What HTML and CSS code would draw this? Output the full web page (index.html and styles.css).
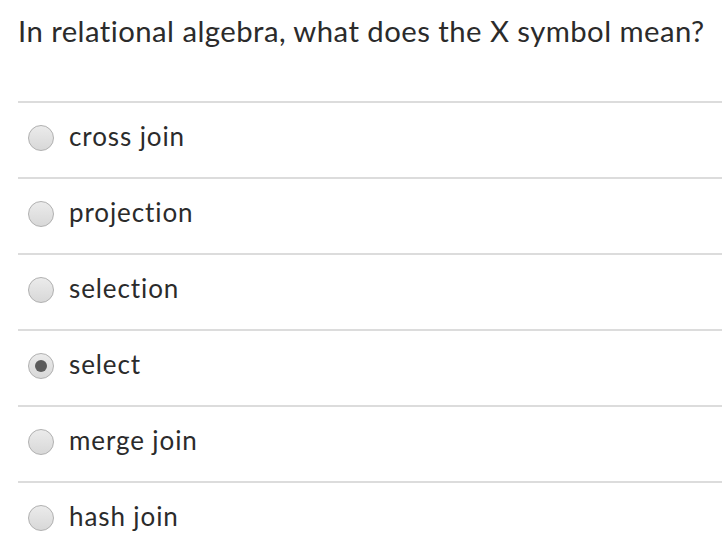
FILE: index.html
```html
<!DOCTYPE html>
<html lang="en">
<head>
    <meta charset="UTF-8">
    <meta name="viewport" content="width=device-width, initial-scale=1.0">
    <title>Question</title>
    <link rel="stylesheet" href="styles.css">
</head>
<body>

<div class="question">
    <h1 class="prompt">In relational algebra, what does the X symbol mean?</h1>

    <div class="choices">
        <label class="choice">
            <input type="radio" name="answer" value="a">
            <span class="radio"></span>
            <span class="choice-text">cross join</span>
        </label>
        <label class="choice">
            <input type="radio" name="answer" value="b">
            <span class="radio"></span>
            <span class="choice-text">projection</span>
        </label>
        <label class="choice">
            <input type="radio" name="answer" value="c">
            <span class="radio"></span>
            <span class="choice-text">selection</span>
        </label>
        <label class="choice">
            <input type="radio" name="answer" value="d" checked>
            <span class="radio"></span>
            <span class="choice-text">select</span>
        </label>
        <label class="choice">
            <input type="radio" name="answer" value="e">
            <span class="radio"></span>
            <span class="choice-text">merge join</span>
        </label>
        <label class="choice">
            <input type="radio" name="answer" value="f">
            <span class="radio"></span>
            <span class="choice-text">hash join</span>
        </label>
    </div>
</div>

</body>
</html>
```

FILE: styles.css
```css
body {
    margin: 0;
    font-family: Lato, "Open Sans", Arial, sans-serif;
    background-color: #fff;
    color: #333;
}
.question {
    padding-left: 18px;
}
.prompt {
    margin: 0;
    padding-top: 12px;
    height: 89px;
    font-size: 29.3px;
    font-weight: normal;
    line-height: 38px;
    letter-spacing: 0.45px;
    color: #2b2b2b;
}
.choice {
    display: flex;
    align-items: center;
    height: 66px;
    padding-bottom: 8px;
    border-top: 2px solid #dcdcdc;
    cursor: pointer;
}
.choice input {
    display: none;
}
.radio {
    position: relative;
    flex-shrink: 0;
    width: 24px;
    height: 24px;
    margin-top: 4px;
    margin-left: 10px;
    margin-right: 15px;
    border: 1px solid #b0b0b0;
    border-radius: 50%;
    background: linear-gradient(#ebebeb, #d8d8d8);
}
.choice input:checked + .radio::after {
    content: "";
    position: absolute;
    top: 6px;
    left: 6px;
    width: 12px;
    height: 12px;
    border-radius: 50%;
    background-color: #5c5c5c;
}
.choice-text {
    font-size: 26px;
    letter-spacing: 0.9px;
    color: #2b2b2b;
}
```
